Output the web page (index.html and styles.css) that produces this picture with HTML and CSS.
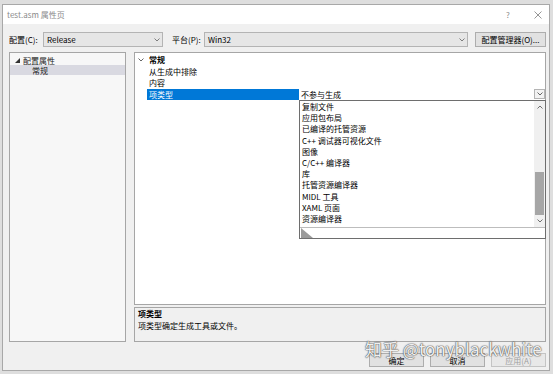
FILE: index.html
```html
<!DOCTYPE html>
<html lang="zh-CN">
<head>
<meta charset="utf-8">
<title>test.asm 属性页</title>
<link rel="stylesheet" href="styles.css">
</head>
<body>
<div class="dialog">
  <div class="titlebar">
    <span class="title">test.asm 属性页</span>
    <span class="help">?</span>
    <span class="close"><svg width="8" height="8" viewBox="0 0 8 8"><path d="M0.5 0.5L7.5 7.5M7.5 0.5L0.5 7.5" stroke="#8a8a8a" stroke-width="0.9" fill="none"/></svg></span>
  </div>
  <div class="content">
    <div class="config-row">
      <span class="label label-config">配置(C):</span>
      <div class="combo combo-config"><span>Release</span><svg class="chev" width="6" height="4" viewBox="0 0 6 4"><path d="M0.5 0.5L3 3L5.5 0.5" stroke="#707070" stroke-width="0.9" fill="none"/></svg></div>
      <span class="label label-platform">平台(P):</span>
      <div class="combo combo-platform"><span>Win32</span><svg class="chev" width="6" height="4" viewBox="0 0 6 4"><path d="M0.5 0.5L3 3L5.5 0.5" stroke="#707070" stroke-width="0.9" fill="none"/></svg></div>
      <div class="btn btn-manager">配置管理器(O)...</div>
    </div>
    <div class="panels">
      <div class="tree">
        <div class="tree-row tree-root"><svg class="tri" width="5" height="5" viewBox="0 0 5 5"><path d="M5 0L5 5L0 5Z" fill="#333"/></svg><span>配置属性</span></div>
        <div class="tree-row tree-child selected">常规</div>
      </div>
      <div class="right">
        <div class="grid">
          <div class="row header"><span class="gutter"><svg width="6" height="4" viewBox="0 0 6 4"><path d="M0.5 0.5L3 3L5.5 0.5" stroke="#555" stroke-width="0.9" fill="none"/></svg></span><span class="name">常规</span></div>
          <div class="row"><span class="gutter"></span><span class="name">从生成中排除</span></div>
          <div class="row"><span class="gutter"></span><span class="name">内容</span></div>
          <div class="row selected"><span class="gutter"></span><span class="name">项类型</span><span class="value"><span class="value-text">不参与生成</span><span class="drop-btn"><svg width="6" height="4" viewBox="0 0 6 4"><path d="M0.5 0.5L3 3L5.5 0.5" stroke="#555" stroke-width="0.9" fill="none"/></svg></span></span></div>
          <div class="dropdown">
            <div class="dd-main">
              <div class="dd-items">
                <div class="dd-item">复制文件</div>
                <div class="dd-item">应用包布局</div>
                <div class="dd-item">已编译的托管资源</div>
                <div class="dd-item">C++ 调试器可视化文件</div>
                <div class="dd-item">图像</div>
                <div class="dd-item">C/C++ 编译器</div>
                <div class="dd-item">库</div>
                <div class="dd-item">托管资源编译器</div>
                <div class="dd-item">MIDL 工具</div>
                <div class="dd-item">XAML 页面</div>
                <div class="dd-item">资源编译器</div>
              </div>
              <div class="scrollbar">
                <div class="sb-btn"><svg width="6" height="4" viewBox="0 0 6 4"><path d="M0.5 3.5L3 1L5.5 3.5" stroke="#606060" stroke-width="0.9" fill="none"/></svg></div>
                <div class="sb-track"><div class="sb-thumb"></div></div>
                <div class="sb-btn"><svg width="6" height="4" viewBox="0 0 6 4"><path d="M0.5 0.5L3 3L5.5 0.5" stroke="#606060" stroke-width="0.9" fill="none"/></svg></div>
              </div>
            </div>
            <div class="dd-grip"><svg class="grip" width="12" height="10" viewBox="0 0 12 10"><path d="M0 0L12 10L0 10Z" fill="#9a9a9a"/></svg></div>
          </div>
        </div>
        <div class="desc">
          <div class="desc-title">项类型</div>
          <div class="desc-text">项类型确定生成工具或文件。</div>
        </div>
      </div>
    </div>
    <div class="buttons">
      <div class="btn btn-action">确定</div>
      <div class="btn btn-action">取消</div>
      <div class="btn btn-action disabled">应用(A)</div>
    </div>
    <div class="watermark">知乎 @tonyblackwhite</div>
  </div>
</div>
</body>
</html>
```
FILE: styles.css
```css
* { box-sizing: border-box; }
html, body { margin: 0; padding: 0; }
body {
  width: 553px;
  height: 374px;
  overflow: hidden;
  background: #dedede;
  font-family: "Noto Sans CJK SC", "Noto Sans", sans-serif;
  font-size: 8px;
  color: #000;
}
.dialog {
  margin: 4px 0 0 2px;
  width: 548px;
  height: 367px;
  border: 1px solid #a8a8a8;
  background: #f0f0f0;
  display: flex;
  flex-direction: column;
}
.titlebar {
  height: 19px;
  flex: none;
  background: #fff;
  display: flex;
  align-items: center;
  padding-left: 4px;
}
.title { flex: 1; color: #8a8a8a; font-size: 8px; }
.help { width: 16px; margin-right: 11px; text-align: center; color: #8a8a8a; font-size: 8px; }
.close { width: 22px; display: flex; justify-content: center; align-items: center; }
.content {
  flex: 1;
  display: flex;
  flex-direction: column;
  padding: 8px 3px 0 6px;
  position: relative;
}
.config-row { display: flex; align-items: center; height: 15px; flex: none; }
.label { flex: none; }
.label-config { width: 34px; }
.label-platform { width: 32px; margin-left: 9px; }
.combo {
  height: 15px;
  border: 1px solid #b4b4b4;
  background: #e6e6e6;
  display: flex;
  align-items: center;
  padding-left: 3px;
  flex: none;
}
.combo .chev { margin-left: auto; margin-right: 2px; }
.combo-config { width: 120px; }
.combo-platform { width: 264px; }
.btn {
  height: 15px;
  border: 1px solid #adadad;
  background: #e1e1e1;
  display: flex;
  align-items: center;
  justify-content: center;
  flex: none;
}
.btn-manager { width: 71px; margin-left: 7px; }
.panels { display: flex; gap: 8px; height: 290px; margin-top: 5px; flex: none; }
.tree {
  width: 117px;
  flex: none;
  background: #f7f7f7;
  border: 1px solid #a6a6a6;
  padding-top: 2px;
}
.tree-row { height: 10px; display: flex; align-items: center; color: #222; }
.tree-root { padding-left: 5px; }
.tree-root .tri { margin-right: 3px; }
.tree-child { padding-left: 22px; }
.tree-row.selected { background: #d9d9e1; }
.right { flex: 1; display: flex; flex-direction: column; gap: 2px; }
.grid {
  flex: 1;
  background: #fff;
  border: 1px solid #a6a6a6;
  position: relative;
  padding-top: 1px;
}
.row { height: 11.5px; display: flex; align-items: center; }
.gutter { width: 12px; flex: none; display: flex; justify-content: center; align-items: center; }
.name { width: 152px; flex: none; padding-left: 2px; height: 100%; display: flex; align-items: center; }
.header .name { font-weight: bold; }
.row.selected .name { background: #0078d7; color: #fff; }
.value { flex: 1; height: 100%; display: flex; align-items: center; padding-left: 2px; }
.drop-btn {
  margin-left: auto;
  width: 11px;
  height: 10px;
  border: 1px solid #b4b4b4;
  background: #f2f2f2;
  display: flex;
  align-items: center;
  justify-content: center;
}
.dropdown {
  position: absolute;
  left: 164px;
  top: 47px;
  width: 247px;
  height: 139px;
  background: #fff;
  border: 1px solid #6e6e6e;
  display: flex;
  flex-direction: column;
}
.dd-main { height: 127px; display: flex; border-bottom: 1px solid #bdbdbd; flex: none; }
.dd-items { flex: 1; padding-left: 2px; }
.dd-item { height: 11.2px; line-height: 11.2px; white-space: nowrap; }
.scrollbar { width: 11px; background: #f0f0f0; display: flex; flex-direction: column; }
.sb-btn { height: 12px; display: flex; align-items: center; justify-content: center; flex: none; }
.sb-track { flex: 1; display: flex; flex-direction: column; justify-content: flex-end; }
.sb-thumb { height: 43px; background: #a6a6a6; margin: 0 1px; }
.dd-grip { flex: 1; display: flex; align-items: flex-end; padding-left: 1px; }
.desc {
  height: 35px;
  flex: none;
  border: 1px solid #a6a6a6;
  background: #f0f0f0;
  padding: 0 3px;
}
.desc-title { height: 12px; line-height: 12px; font-weight: bold; }
.desc-text { height: 12px; line-height: 12px; }
.buttons { display: flex; justify-content: flex-end; gap: 6px; margin-top: 11px; height: 14px; flex: none; }
.btn-action { width: 55px; height: 14px; }
.btn-action.disabled { color: #a0a0a0; background: #e8e8e8; border-color: #c4c4c4; }
.watermark {
  position: absolute;
  left: 362px;
  top: 316px;
  font-size: 17px;
  line-height: 17px;
  white-space: nowrap;
  color: rgba(255, 255, 255, 0.92);
  text-shadow: 0 0 1px #555, 0 0 1px #555, 0 0 2px rgba(0,0,0,0.4);
}
```
